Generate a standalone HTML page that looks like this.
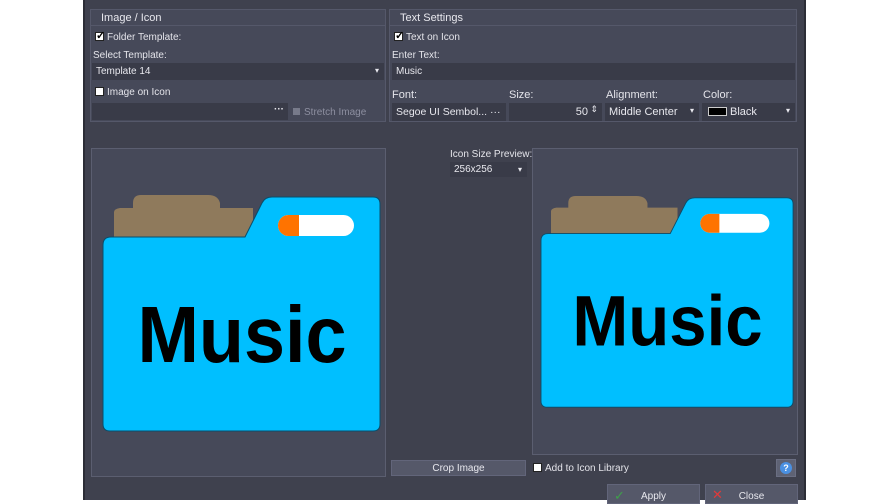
<!DOCTYPE html>
<html><head><style>
*{box-sizing:border-box;margin:0;padding:0}
body{width:888px;height:500px;background:#fff;position:relative;overflow:hidden;font-family:"Liberation Sans",sans-serif;font-size:10px;color:#e4e4ea;white-space:nowrap}
.win{position:absolute;left:83px;top:0;width:723px;height:500px;background:#3f414e;border-left:2px solid #2c2d36;border-right:2px solid #2c2d36}
.a{position:absolute}
.grp{position:absolute;background:#464959;border:1px solid #55586a}
.hdr{position:absolute;left:0;right:0;top:0;height:16px;border-bottom:1px solid #55586a;font-size:11px;padding:2px 10px;color:#e8e8ee}
.inp{position:absolute;background:#393b48;height:17px;padding:3px 4px;color:#e8e8ee;overflow:hidden}
.dd::after{content:"▾";position:absolute;right:5px;top:3px;font-size:8px}
.cb{display:inline-block;width:9px;height:9px;background:#fff;border:1px solid #222;vertical-align:-1px;margin-right:3px;position:relative}
.ck::after{content:"✓";position:absolute;left:0px;top:-4px;font-size:11px;color:#000;font-weight:bold}
.pv{position:absolute;background:#464959;border:1px solid #5b5e70}
.btn{position:absolute;background:#555869;border:1px solid #62657a;text-align:center;color:#e8e8ee}
</style></head><body>
<div class="win"></div>
<div class="grp" style="left:90px;top:9px;width:296px;height:113px">
 <div class="hdr">Image / Icon</div>
</div>
<div class="a" style="left:95px;top:32px"><span class="cb ck"></span>Folder Template:</div>
<div class="a" style="left:93px;top:50px">Select Template:</div>
<div class="inp dd" style="left:92px;top:63px;width:292px">Template 14</div>
<div class="a" style="left:95px;top:87px"><span class="cb"></span>Image on Icon</div>
<div class="inp" style="left:92px;top:103px;width:196px"><span style="position:absolute;right:4px;top:1px;font-weight:bold">···</span></div>
<div class="a" style="left:293px;top:107px;color:#8d8fa0"><span style="display:inline-block;width:7px;height:7px;background:#777a8a;margin-right:4px"></span>Stretch Image</div>
<div class="grp" style="left:389px;top:9px;width:408px;height:113px">
 <div class="hdr">Text Settings</div>
</div>
<div class="a" style="left:394px;top:32px"><span class="cb ck"></span>Text on Icon</div>
<div class="a" style="left:392px;top:50px">Enter Text:</div>
<div class="inp" style="left:392px;top:63px;width:403px">Music</div>
<div class="a" style="left:392px;top:89px;font-size:11px">Font:</div>
<div class="a" style="left:509px;top:89px;font-size:11px">Size:</div>
<div class="a" style="left:606px;top:89px;font-size:11px">Alignment:</div>
<div class="a" style="left:703px;top:89px;font-size:11px">Color:</div>
<div class="inp" style="left:392px;top:103px;width:114px;height:18px;font-size:10.5px">Segoe UI Sembol... ···</div>
<div class="inp" style="left:509px;top:103px;width:93px;height:18px;font-size:11px;text-align:right;padding-right:14px">50<span style="position:absolute;right:4px;top:1px;font-size:9px">⇕</span></div>
<div class="inp dd" style="left:605px;top:103px;width:94px;height:18px;font-size:11px">Middle Center</div>
<div class="inp dd" style="left:702px;top:103px;width:93px;height:18px;font-size:11px"><span style="display:inline-block;width:19px;height:9px;background:#000;border:1px solid #ccc;vertical-align:-1px;margin:0 3px 0 2px"></span>Black</div>
<div class="pv" style="left:91px;top:148px;width:295px;height:329px"></div>
<div class="pv" style="left:532px;top:148px;width:266px;height:307px"></div>
<div class="a" style="left:450px;top:149px">Icon Size Preview:</div>
<div class="inp dd" style="left:450px;top:162px;width:77px;height:15px;padding-top:2px">256x256</div>
<svg class="a" style="left:0;top:0" width="888" height="500">
 <defs>
  <g id="f">
   <path d="M11,17 q0,-3 6,-4 H30 V8 q0,-8 8,-8 H105 q10,0 12,8 V13 H150 V45 H11 Z" fill="#8f7a5c"/>
   <path d="M0,50 q0,-8 8,-8 H142 L159,8 q3,-6 10,-6 H270 q7,0 7,7 V229 q0,7 -7,7 H7 q-7,0 -7,-7 Z" fill="#00bfff" stroke="#0a4d6a" stroke-width="1"/>
   <rect x="175" y="20" width="76" height="21" rx="10.5" fill="#fff"/>
   <path d="M185.5,20 H196 V41 H185.5 a10.5,10.5 0 0 1 0,-21 Z" fill="#ff7300"/>
   <text x="139" y="167" text-anchor="middle" font-family="Liberation Sans" font-weight="bold" font-size="80" fill="#000" textLength="209" lengthAdjust="spacingAndGlyphs">Music</text>
  </g>
 </defs>
 <use href="#f" transform="translate(103,195)"/>
 <use href="#f" transform="translate(541,196) scale(0.91,0.895)"/>
</svg>
<div class="btn" style="left:391px;top:460px;width:135px;height:16px;padding-top:2px">Crop Image</div>
<div class="a" style="left:533px;top:463px"><span class="cb"></span>Add to Icon Library</div>
<div class="a" style="left:776px;top:459px;width:20px;height:18px;background:#5e6274;border:1px solid #6a6e82"><div style="margin:2px auto;width:12px;height:12px;border-radius:50%;background:#4a90e2;color:#fff;font-size:9px;text-align:center;line-height:12px;font-weight:bold">?</div></div>
<div class="btn" style="left:607px;top:484px;width:93px;height:20px;padding-top:6px"><span style="position:absolute;left:6px;top:3px;color:#3ea04a;font-size:13px">✓</span>Apply</div>
<div class="btn" style="left:705px;top:484px;width:93px;height:20px;padding-top:6px"><span style="position:absolute;left:6px;top:2px;color:#e03a3a;font-size:13px">✕</span>Close</div>
</body></html>
